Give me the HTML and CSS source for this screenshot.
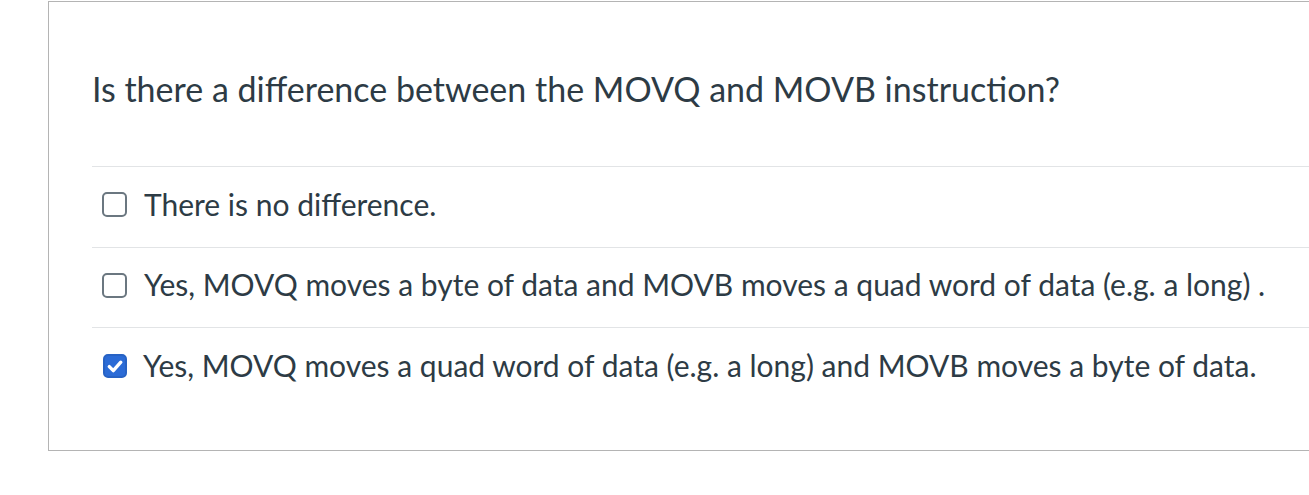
FILE: index.html
```html
<!DOCTYPE html>
<html lang="en">
<head>
<meta charset="utf-8">
<title>Quiz question</title>
<link rel="stylesheet" href="styles.css">
</head>
<body>
<div class="question">
  <div class="question-text">Is there a difference between the MOVQ and MOVB instruction?</div>
  <div class="answers">
    <div class="answer">
      <span class="checkbox"></span>
      <span class="answer-text">There is no difference.</span>
    </div>
    <div class="answer">
      <span class="checkbox"></span>
      <span class="answer-text">Yes, MOVQ moves a byte of data and MOVB moves a quad word of data (e.g. a long) .</span>
    </div>
    <div class="answer">
      <span class="checkbox checked">
        <svg viewBox="0 0 24 24" width="24" height="24"><path d="M6.3 12.6 L10.3 16.6 L17.8 8.2" fill="none" stroke="#fff" stroke-width="3.4" stroke-linecap="round" stroke-linejoin="round"/></svg>
      </span>
      <span class="answer-text">Yes, MOVQ moves a quad word of data (e.g. a long) and MOVB moves a byte of data.</span>
    </div>
  </div>
</div>
</body>
</html>
```
FILE: styles.css
```css
html, body {
  margin: 0;
  padding: 0;
  background: #ffffff;
}
body {
  font-family: "Lato", "Noto Sans", sans-serif;
  color: #2d3b45;
  overflow: hidden;
}
.question {
  margin: 1px 0 0 48px;
  border: 1px solid #b4b4b4;
  border-right: none;
  padding: 0 0 0 43px;
  height: 448px;
  box-sizing: content-box;
}
.question-text {
  font-size: 34px;
  line-height: 40px;
  padding-top: 67px;
  margin-bottom: 57px;
}
.answers {
  display: flex;
  flex-direction: column;
}
.answer {
  display: flex;
  align-items: center;
  height: 80.5px;
  box-sizing: border-box;
  border-top: 1px solid #e2e4e6;
  padding-left: 10px;
  gap: 17px;
  font-size: 30px;
}
.answer-text {
  position: relative;
  top: -3px;
}
.checkbox {
  width: 25px;
  height: 25px;
  box-sizing: border-box;
  border: 2px solid #6b7780;
  border-radius: 5px;
  flex: none;
  position: relative;
  top: -2px;
}
.checkbox.checked {
  width: 24px;
  height: 24px;
  margin-left: 1px;
  margin-right: -1px;
  background: #2b6bd6;
  border-color: #2762c4;
  display: flex;
}
.checkbox.checked svg {
  margin: -2px;
}
```
